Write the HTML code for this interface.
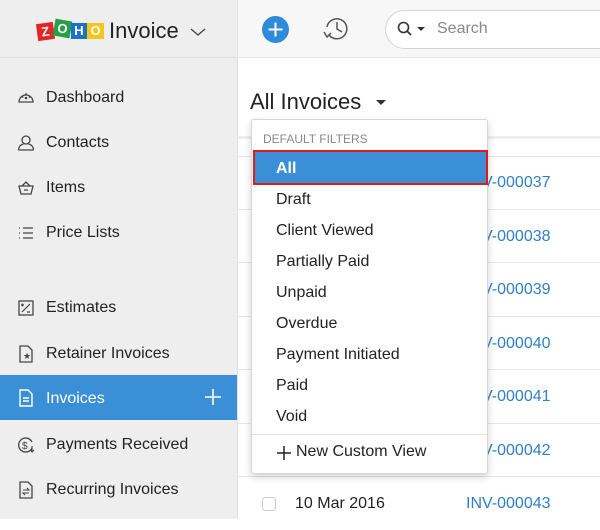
<!DOCTYPE html>
<html><head><meta charset="utf-8"><style>
*{box-sizing:border-box;margin:0;padding:0}
body{width:600px;height:519px;overflow:hidden;font-family:"Liberation Sans",sans-serif;background:#fff;position:relative;color:#222}
.side{position:absolute;left:0;top:0;width:238px;height:519px;background:#eeeeee;border-right:1px solid #e2e2e2}
.logo{position:absolute;left:0;top:0;width:237px;height:58px;border-bottom:1px solid #e0e0e0}
.nav{position:absolute;left:0;width:237px;height:45px;font-size:16px;line-height:45px;padding-left:46px;color:#222}
.nav svg{position:absolute;left:17px;top:14px}
.act{background:#3a8fd6;color:#fff}
.top{position:absolute;left:238px;top:0;width:362px;height:58px;background:#f7f7f7;border-bottom:1px solid #e6e6e6}
.row{position:absolute;left:238px;width:362px;border-top:1px solid #e6e6e6;height:54px}
.inv{position:absolute;left:466px;font-size:16px;color:#2f7fc7}
.dd{position:absolute;left:251px;top:119px;width:237px;height:355px;background:#fff;border:1px solid #d6d6d6;border-radius:3px;box-shadow:0 3px 8px rgba(0,0,0,.18)}
.it{position:absolute;left:24px;font-size:16px;color:#222}
</style></head><body>
<div class="side">
 <div class="logo">
  <div style="position:absolute;left:37px;top:20px;width:68px;height:22px">
   <div style="position:absolute;left:0;top:3px;width:17px;height:17px;background:#e42527;transform:rotate(-8deg);color:#fff;font:bold 13px/17px 'Liberation Sans';text-align:center">Z</div>
   <div style="position:absolute;left:17px;top:0;width:17px;height:17px;background:#25a046;transform:rotate(10deg);color:#fff;font:bold 13px/17px 'Liberation Sans';text-align:center">O</div>
   <div style="position:absolute;left:34px;top:3px;width:16px;height:16px;background:#1a73c9;color:#fff;font:bold 13px/16px 'Liberation Sans';text-align:center">H</div>
   <div style="position:absolute;left:50px;top:3px;width:17px;height:16px;background:#f7c51c;color:#fff;font:bold 13px/16px 'Liberation Sans';text-align:center">O</div>
  </div>
  <div style="position:absolute;left:109px;top:18px;font-size:22px;color:#222">Invoice</div>
  <svg style="position:absolute;left:190px;top:28px" width="16" height="9"><path d="M1 1l7 6 7-6" fill="none" stroke="#444" stroke-width="1.3"/></svg>
 </div>
 <div class="nav" style="top:75px"><svg width="18" height="16"><path d="M2 13a7 7 0 1 1 14 0z" fill="none" stroke="#444" stroke-width="1.3"/><circle cx="9" cy="9" r="1.3" fill="#444"/><circle cx="5.5" cy="8" r=".9" fill="#444"/><circle cx="12.5" cy="8" r=".9" fill="#444"/><circle cx="9" cy="5" r=".9" fill="#444"/></svg>Dashboard</div>
 <div class="nav" style="top:120px"><svg width="18" height="18"><circle cx="9" cy="6" r="4" fill="none" stroke="#444" stroke-width="1.3"/><path d="M1.5 16c0-4 3-5.5 5-6M16.5 16c0-4-3-5.5-5-6M1.5 16h15" fill="none" stroke="#444" stroke-width="1.3"/></svg>Contacts</div>
 <div class="nav" style="top:165px"><svg width="18" height="18"><path d="M2 7h14l-2 8H4zM5 7l4-4 4 4M7 11h4" fill="none" stroke="#444" stroke-width="1.3"/></svg>Items</div>
 <div class="nav" style="top:210px"><svg width="18" height="18"><path d="M2 4h1M2 9h1M2 14h1M6 4h10M6 9h10M6 14h10" stroke="#444" stroke-width="1.3"/></svg>Price Lists</div>
 <div class="nav" style="top:285px"><svg width="18" height="18"><rect x="2" y="2" width="14" height="14" fill="none" stroke="#444" stroke-width="1.3"/><path d="M5 13l8-8M4 6h3M5.5 4.5v3M10 13h3" stroke="#444" stroke-width="1.2"/></svg>Estimates</div>
 <div class="nav" style="top:331px"><svg width="18" height="18"><path d="M3 1h8l4 4v12H3z" fill="none" stroke="#444" stroke-width="1.3"/><text x="6" y="14" font-size="9" fill="#444">★</text></svg>Retainer Invoices</div>
 <div class="nav act" style="top:375px;line-height:47px"><svg width="18" height="18"><path d="M3 1h8l4 4v12H3z" fill="none" stroke="#fff" stroke-width="1.4"/><path d="M6 9h6M6 12h6" stroke="#fff" stroke-width="1.4"/></svg>Invoices<svg style="left:205px;top:14px" width="16" height="16"><path d="M8 0v16M0 8h16" stroke="#fff" stroke-width="1.6"/></svg></div>
 <div class="nav" style="top:422px"><svg width="18" height="18"><path d="M15 12A7 7 0 1 1 15 6" fill="none" stroke="#444" stroke-width="1.3"/><text x="5" y="13" font-size="10" fill="#444">$</text><path d="M15 10v6M13 14l2 2 2-2" fill="none" stroke="#444" stroke-width="1.1"/></svg>Payments Received</div>
 <div class="nav" style="top:467px"><svg width="18" height="18"><path d="M3 1h8l4 4v12H3z" fill="none" stroke="#444" stroke-width="1.3"/><path d="M6 9h6l-2-2M12 12H6l2 2" fill="none" stroke="#444" stroke-width="1.1"/></svg>Recurring Invoices</div>
</div>
<div class="top">
 <svg style="position:absolute;left:24px;top:16px" width="27" height="27"><circle cx="13.5" cy="13.5" r="13.5" fill="#2f8ad8"/><path d="M13.5 6.5v14M6.5 13.5h14" stroke="#fff" stroke-width="2"/></svg>
 <svg style="position:absolute;left:85px;top:15px" width="28" height="28"><path d="M6 20A10 10 0 1 0 4 12" fill="none" stroke="#555" stroke-width="1.5"/><path d="M1 17l3 5 4-4" fill="none" stroke="#555" stroke-width="1.5"/><path d="M14 7v7l5 3" fill="none" stroke="#555" stroke-width="1.5"/></svg>
 <div style="position:absolute;left:147px;top:10px;width:240px;height:39px;border:1px solid #d4d4d4;border-radius:20px;background:#fff"></div>
 <svg style="position:absolute;left:159px;top:21px" width="30" height="16"><circle cx="6.5" cy="6.5" r="5" fill="none" stroke="#333" stroke-width="1.6"/><path d="M10 10l4 4" stroke="#333" stroke-width="1.8"/><path d="M20 6h8l-4 4z" fill="#333"/></svg>
 <div style="position:absolute;left:199px;top:20px;font-size:16px;color:#888">Search</div>
</div>
<div style="position:absolute;left:250px;top:89px;font-size:22px;color:#222">All Invoices</div>
<svg style="position:absolute;left:376px;top:100px" width="10" height="6"><path d="M0 0h10L5 5z" fill="#333"/></svg>
<div style="position:absolute;left:238px;top:136px;width:362px;height:3px;background:#eee"></div>
<div class="row" style="top:156px"></div>
<div class="row" style="top:209px"></div>
<div class="row" style="top:262px"></div>
<div class="row" style="top:316px"></div>
<div class="row" style="top:369px"></div>
<div class="row" style="top:423px"></div>
<div class="row" style="top:476px"></div>
<div class="inv" style="top:174px">INV-000037</div>
<div class="inv" style="top:228px">INV-000038</div>
<div class="inv" style="top:281px">INV-000039</div>
<div class="inv" style="top:335px">INV-000040</div>
<div class="inv" style="top:388px">INV-000041</div>
<div class="inv" style="top:442px">INV-000042</div>
<div class="inv" style="top:495px">INV-000043</div>
<div style="position:absolute;left:262px;top:497px;width:14px;height:14px;border:1px solid #ccc;border-radius:3px"></div>
<div style="position:absolute;left:295px;top:495px;font-size:16px">10 Mar 2016</div>
<div class="dd">
 <div style="position:absolute;left:11px;top:12px;font-size:12px;color:#888">DEFAULT FILTERS</div>
 <div style="position:absolute;left:1px;top:30px;width:235px;height:35px;background:#3a8fd6;border:2px solid #e11a1a"></div>
 <div class="it" style="top:40px;color:#fff;font-weight:bold">All</div>
 <div class="it" style="top:71px">Draft</div>
 <div class="it" style="top:102px">Client Viewed</div>
 <div class="it" style="top:133px">Partially Paid</div>
 <div class="it" style="top:164px">Unpaid</div>
 <div class="it" style="top:195px">Overdue</div>
 <div class="it" style="top:226px">Payment Initiated</div>
 <div class="it" style="top:257px">Paid</div>
 <div class="it" style="top:288px">Void</div>
 <div style="position:absolute;left:0;top:314px;width:235px;height:1px;background:#e2e2e2"></div>
 <svg style="position:absolute;left:24px;top:325px" width="16" height="16"><path d="M8 1v14M1 8h14" stroke="#222" stroke-width="1.5"/></svg>
 <div class="it" style="top:323px;left:44px">New Custom View</div>
</div>
</body></html>
